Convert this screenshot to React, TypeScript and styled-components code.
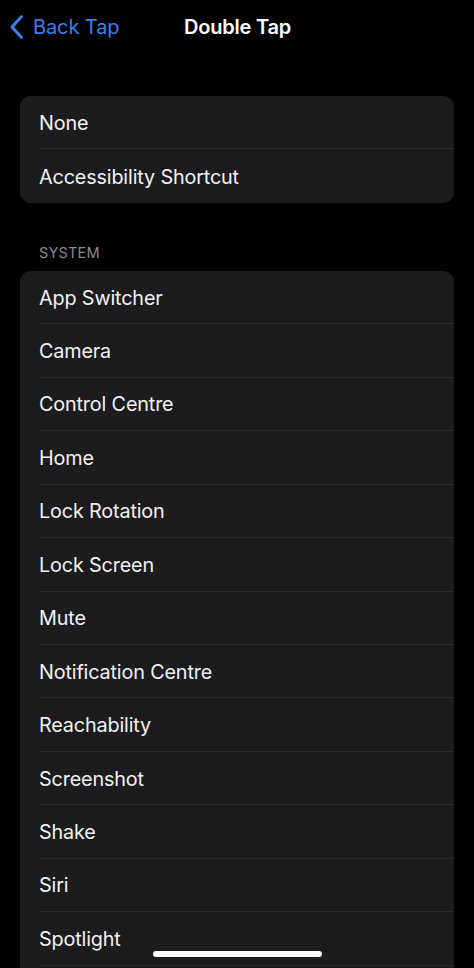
import React from "react";
import styled, { createGlobalStyle } from "styled-components";

const GlobalStyle = createGlobalStyle`
  html, body {
    margin: 0;
    padding: 0;
    background: #000;
  }
  body {
    font-family: Inter, "Liberation Sans", Arial, sans-serif;
    -webkit-font-smoothing: antialiased;
  }
`;

const Screen = styled.div`
  width: 474px;
  height: 968px;
  overflow: hidden;
  background: #000;
  color: #fff;
  position: relative;
`;

const NavBar = styled.div`
  height: 54px;
  display: grid;
  grid-template-columns: 1fr auto 1fr;
  align-items: center;
  padding: 0 8px 0 9px;
`;

const BackButton = styled.div`
  display: flex;
  align-items: center;
  gap: 9px;
  color: #3f7fe6;
  font-size: 20px;
  letter-spacing: -0.1px;
`;

const Title = styled.div`
  font-size: 20px;
  font-weight: 600;
  letter-spacing: -0.2px;
`;

const Content = styled.div`
  padding: 42px 20px 0;
  display: flex;
  flex-direction: column;
`;

const Card = styled.div<{ $open?: boolean }>`
  background: #1c1c1e;
  border-radius: 11px;
  overflow: hidden;
  padding-bottom: ${(p) => (p.$open ? "40px" : "0")};
`;

const Row = styled.div<{ $last?: boolean }>`
  height: 53.45px;
  margin-left: 19px;
  padding-top: 1px;
  display: flex;
  align-items: center;
  font-size: 19.8px;
  letter-spacing: -0.15px;
  color: #f2f2f4;
  box-sizing: border-box;
  border-bottom: ${(p) => (p.$last ? "none" : "1px solid #2d2d30")};
`;

const SectionLabel = styled.div`
  margin: 40px 0 8px 19px;
  font-size: 14.5px;
  color: #8a8a8f;
  letter-spacing: 0.2px;
  height: 20px;
  line-height: 20px;
`;

const HomeIndicator = styled.div`
  position: absolute;
  left: 153px;
  top: 951px;
  width: 169px;
  height: 6px;
  border-radius: 3px;
  background: #fff;
`;

const topOptions = ["None", "Accessibility Shortcut"];
const systemOptions = [
  "App Switcher",
  "Camera",
  "Control Centre",
  "Home",
  "Lock Rotation",
  "Lock Screen",
  "Mute",
  "Notification Centre",
  "Reachability",
  "Screenshot",
  "Shake",
  "Siri",
  "Spotlight",
];

export default function App() {
  return (
    <>
      <GlobalStyle />
      <Screen>
        <NavBar>
          <BackButton>
            <svg width="15" height="26" viewBox="0 0 15 26">
              <path
                d="M12.5 2.5 L3 13 L12.5 23.5"
                fill="none"
                stroke="#3f7fe6"
                strokeWidth="3"
                strokeLinecap="round"
                strokeLinejoin="round"
              />
            </svg>
            Back Tap
          </BackButton>
          <Title>Double Tap</Title>
          <div />
        </NavBar>
        <Content>
          <Card>
            {topOptions.map((o, i) => (
              <Row key={o} $last={i === topOptions.length - 1}>
                {o}
              </Row>
            ))}
          </Card>
          <SectionLabel>SYSTEM</SectionLabel>
          <Card $open>
            {systemOptions.map((o) => (
              <Row key={o}>{o}</Row>
            ))}
          </Card>
        </Content>
        <HomeIndicator />
      </Screen>
    </>
  );
}
